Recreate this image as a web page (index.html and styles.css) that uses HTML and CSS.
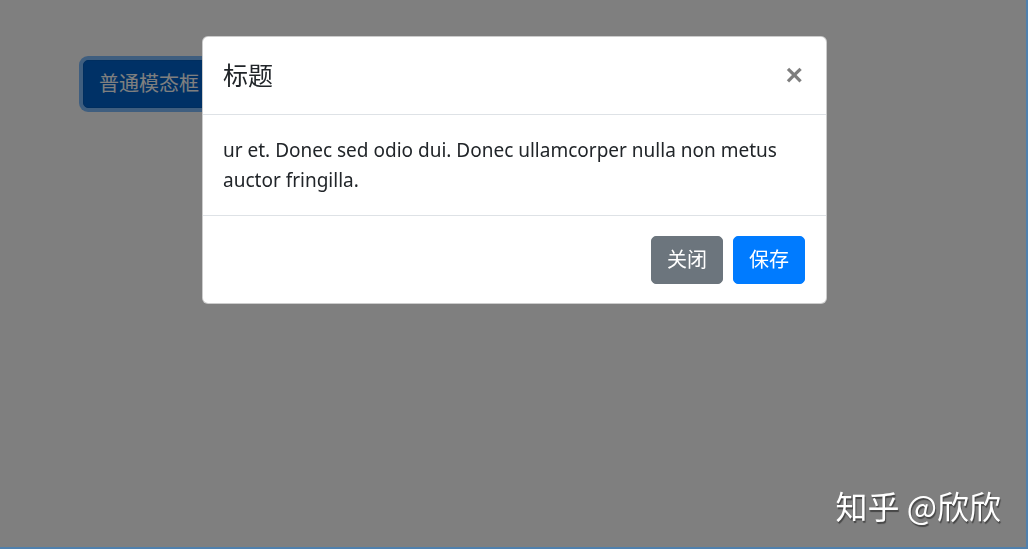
FILE: index.html
```html
<!DOCTYPE html>
<html lang="zh-CN">
<head>
<meta charset="utf-8">
<title>模态框</title>
<link rel="stylesheet" href="styles.css">
</head>
<body>
<div class="page">
  <button class="btn btn-primary btn-focus">普通模态框</button>
</div>
<div class="backdrop"></div>
<div class="modal">
  <div class="modal-dialog">
    <div class="modal-content">
      <div class="modal-header">
        <h5 class="modal-title">标题</h5>
        <button class="close" aria-label="Close">×</button>
      </div>
      <div class="modal-body">
        <p>ur et. Donec sed odio dui. Donec ullamcorper nulla non metus auctor fringilla.</p>
      </div>
      <div class="modal-footer">
        <button class="btn btn-secondary">关闭</button>
        <button class="btn btn-primary">保存</button>
      </div>
    </div>
  </div>
</div>
<div class="watermark">知乎 @欣欣</div>
<div class="frame-edge"></div>
</body>
</html>
```

FILE: styles.css
```css
* { box-sizing: border-box; }
html, body { margin: 0; height: 100%; overflow: hidden; }
body {
  font-family: "Noto Sans", "Noto Sans CJK SC", sans-serif;
  font-size: 20px;
  line-height: 30px;
  color: #212529;
  background: #fff;
}
.page {
  padding: 60px 0 0 83px;
}
.btn {
  display: inline-block;
  font-family: inherit;
  font-size: 20px;
  line-height: 30px;
  padding: 8px 15px;
  border: 1px solid transparent;
  border-radius: 5px;
  color: #fff;
  cursor: pointer;
}
.btn-primary { background: #007bff; border-color: #007bff; }
.btn-secondary { background: #6c757d; border-color: #6c757d; }
.btn-focus { box-shadow: 0 0 0 4px rgba(0, 123, 255, .5); background: #0062cc; border-color: #005cbf; }
.backdrop {
  position: fixed;
  inset: 0;
  background: rgba(0, 0, 0, .5);
}
.modal {
  position: fixed;
  inset: 0;
}
.modal-dialog {
  width: 625px;
  margin: 36px 0 0 202px;
}
.modal-content {
  background: #fff;
  border: 1px solid rgba(0, 0, 0, .2);
  border-radius: 6px;
  overflow: hidden;
}
.modal-header {
  display: flex;
  align-items: flex-start;
  justify-content: space-between;
  padding: 20px;
  border-bottom: 1px solid #dee2e6;
}
.modal-title {
  margin: 0;
  font-size: 25px;
  font-weight: 400;
  line-height: 37px;
}
.close {
  background: none;
  border: 0;
  padding: 0;
  margin: 0 3px 0 0;
  font-family: "Liberation Sans", sans-serif;
  font-size: 30px;
  font-weight: 700;
  line-height: 36px;
  color: #000;
  opacity: .5;
  text-shadow: 0 1px 0 #fff;
}
.modal-body {
  padding: 20px;
}
.modal-body p {
  margin: 0;
  font-size: 19px;
  line-height: 30px;
}
.modal-footer {
  display: flex;
  justify-content: flex-end;
  align-items: center;
  gap: 10px;
  padding: 20px 21px 19px 20px;
  border-top: 1px solid #dee2e6;
}
.watermark {
  position: fixed;
  right: 27px;
  bottom: 24px;
  font-family: "Noto Sans CJK SC", sans-serif;
  font-size: 32px;
  line-height: 40px;
  color: #fff;
  text-shadow: 1px 2px 1px rgba(0, 0, 0, .45);
}
.frame-edge {
  position: fixed;
  inset: 0;
  border-right: 2px solid #4f80ad;
  border-bottom: 2px solid #4f80ad;
  pointer-events: none;
}
```
